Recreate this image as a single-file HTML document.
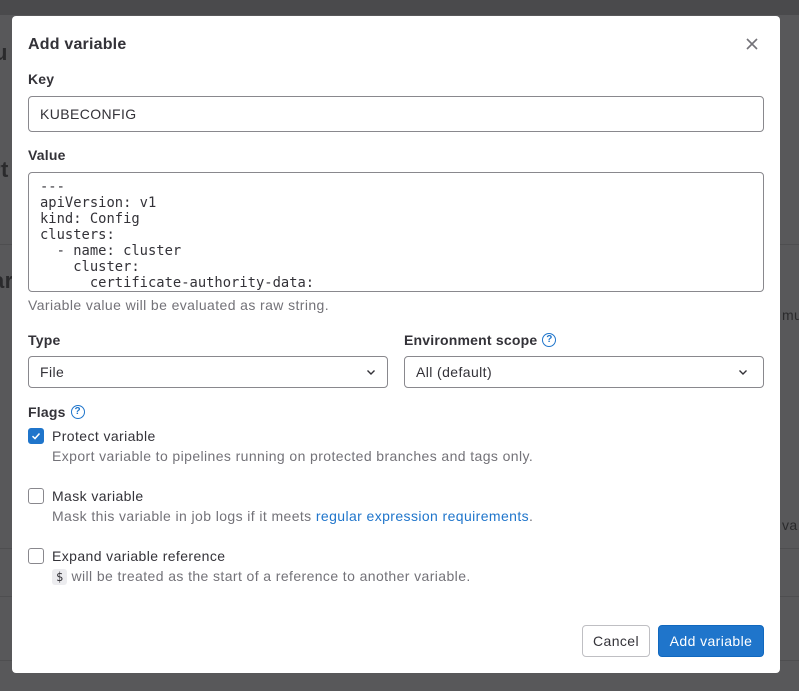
<!DOCTYPE html>
<html><head><meta charset="utf-8"><style>
*{box-sizing:border-box;margin:0;padding:0}
body{width:799px;height:691px;overflow:hidden;background:#525254;font-family:"Liberation Sans",sans-serif;color:#333238;font-size:14px;position:relative;letter-spacing:0.4px}
.bg{position:absolute;left:0;top:0;width:799px;height:691px;background:#58585a}
.topbar{position:absolute;left:0;top:0;width:799px;height:15px;background:#4a4a4c}
.ghost{position:absolute;color:#2a2a2c;font-size:14px}
.line{position:absolute;left:0;width:799px;height:1px;background:#4e4e50}
.modal{position:absolute;left:12px;top:16px;width:768px;height:657px;background:#fff;border-radius:4px}
.abs{position:absolute}
h2{position:absolute;left:16px;top:20px;font-size:16px;font-weight:bold;color:#333238;letter-spacing:0.2px}
.lbl{position:absolute;left:16px;font-weight:bold;font-size:14px;letter-spacing:0.2px}
.inp{position:absolute;border:1px solid #89888d;border-radius:4px;background:#fff}
.mono{font-family:"DejaVu Sans Mono","Liberation Mono",monospace;font-size:13.8px;line-height:16px;white-space:pre;letter-spacing:0}
.help{color:#737278}
.cb{position:absolute;left:16px;width:16px;height:16px;border:1px solid #89888d;border-radius:3px;background:#fff}
.cbl{position:absolute;left:40px;font-size:14px}
.cbh{position:absolute;left:40px;font-size:14px;color:#737278}
a{color:#1f75cb;text-decoration:none}
.q{display:inline-block;width:14px;height:14px;border:1.5px solid #1f75cb;border-radius:50%;color:#1f75cb;font-size:10px;line-height:11px;text-align:center;font-weight:bold;vertical-align:middle;margin-left:5px;margin-top:-3px;letter-spacing:0}
.btn{position:absolute;border-radius:4px;font-size:14px;text-align:center;line-height:30px;height:32px}
</style></head><body>
<div class="bg"></div>
<div class="topbar"></div>
<div class="line" style="top:244px"></div>
<div class="line" style="top:548px"></div>
<div class="line" style="top:596px"></div>
<div class="line" style="top:660px"></div>
<div class="ghost" style="left:-6px;top:40px;font-size:22px;font-weight:bold">u</div>
<div class="ghost" style="left:-8px;top:157px;font-size:22px;font-weight:bold">rt</div>
<div class="ghost" style="left:-8px;top:268px;font-size:22px;font-weight:bold">ar</div>
<div class="ghost" style="left:782px;top:307px">mu</div>
<div class="ghost" style="left:782px;top:517px">va</div>
<div class="modal">
<h2>Add variable</h2>
<svg class="abs" style="left:733px;top:21px" width="14" height="14" viewBox="0 0 14 14"><path d="M2 2L12 12M12 2L2 12" stroke="#737278" stroke-width="1.6"/></svg>
<div class="lbl" style="top:55px">Key</div>
<div class="inp" style="left:16px;top:80px;width:736px;height:36px;padding:8px 11px;line-height:18px">KUBECONFIG</div>
<div class="lbl" style="top:131px">Value</div>
<div class="inp mono" style="left:16px;top:156px;width:736px;height:120px;padding:6px 11px 0;overflow:hidden">---
apiVersion: v1
kind: Config
clusters:
  - name: cluster
    cluster:
      certificate-authority-data:</div>
<div class="abs help" style="left:16px;top:281px">Variable value will be evaluated as raw string.</div>
<div class="lbl" style="top:316px">Type</div>
<div class="inp" style="left:16px;top:340px;width:360px;height:32px;padding:6px 11px;line-height:18px">File</div>
<svg class="abs" style="left:354px;top:351px" width="10" height="10" viewBox="0 0 10 10"><path d="M1.5 3.5L5 7L8.5 3.5" stroke="#333238" stroke-width="1.4" fill="none"/></svg>
<div class="lbl" style="top:316px;left:392px">Environment scope<span class="q">?</span></div>
<div class="inp" style="left:392px;top:340px;width:360px;height:32px;padding:6px 11px;line-height:18px">All (default)</div>
<svg class="abs" style="left:726px;top:351px" width="10" height="10" viewBox="0 0 10 10"><path d="M1.5 3.5L5 7L8.5 3.5" stroke="#333238" stroke-width="1.4" fill="none"/></svg>
<div class="lbl" style="top:388px">Flags<span class="q">?</span></div>
<div class="cb" style="top:412px;background:#1f75cb;border-color:#1f75cb"><svg width="14" height="14" viewBox="0 0 14 14" style="display:block"><path d="M3.5 7.2L6 9.5L10.5 4.5" stroke="#fff" stroke-width="1.5" fill="none"/></svg></div>
<div class="cbl" style="top:412px">Protect variable</div>
<div class="cbh" style="top:432px">Export variable to pipelines running on protected branches and tags only.</div>
<div class="cb" style="top:472px"></div>
<div class="cbl" style="top:472px">Mask variable</div>
<div class="cbh" style="top:492px">Mask this variable in job logs if it meets <a>regular expression requirements</a>.</div>
<div class="cb" style="top:532px"></div>
<div class="cbl" style="top:532px">Expand variable reference</div>
<div class="cbh" style="top:552px"><span style="background:#ececef;border-radius:3px;padding:1px 4px;font-family:'DejaVu Sans Mono',monospace;font-size:12px;color:#333238;letter-spacing:0">$</span> will be treated as the start of a reference to another variable.</div>
<div class="btn" style="left:570px;top:609px;width:68px;border:1px solid #bfbfc3;color:#333238">Cancel</div>
<div class="btn" style="left:646px;top:609px;width:106px;background:#1f75cb;border:1px solid #1068bf;color:#fff">Add variable</div>
</div>
</body></html>
